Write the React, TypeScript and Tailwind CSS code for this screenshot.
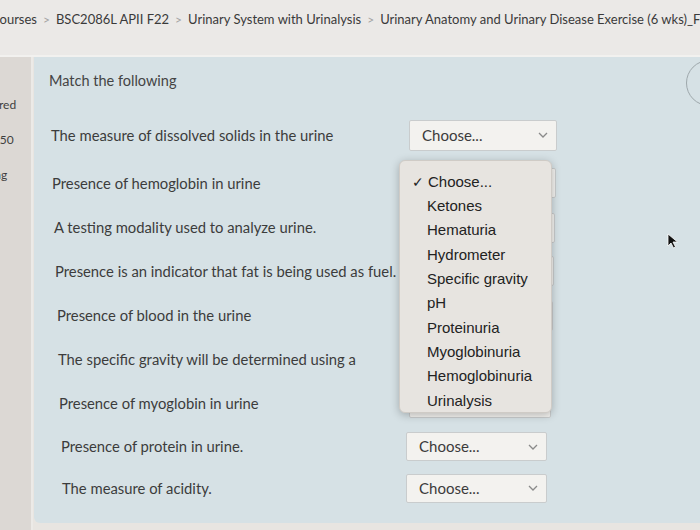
import React from "react";

const rows = [
  { text: "The measure of dissolved solids in the urine", h: "h-[50px]", pl: "pl-[17px]", sel: "w-[148px] h-[31px]" },
  { text: "Presence of hemoglobin in urine", h: "h-[46px]", pl: "pl-[18px]", sel: "w-[147px] h-[30px]" },
  { text: "A testing modality used to analyze urine.", h: "h-[43px]", pl: "pl-[20px]", sel: "w-[146px] h-[30px]" },
  { text: "Presence is an indicator that fat is being used as fuel.", h: "h-[44px]", pl: "pl-[21px]", sel: "w-[145px] h-[30px]" },
  { text: "Presence of blood in the urine", h: "h-[45px]", pl: "pl-[23px]", sel: "w-[144px] h-[30px]" },
  { text: "The specific gravity will be determined using a", h: "h-[43px]", pl: "pl-[24px]", sel: "w-[143px] h-[30px]" },
  { text: "Presence of myoglobin in urine", h: "h-[44px]", pl: "pl-[25px]", sel: "w-[142px] h-[30px]" },
  { text: "Presence of protein in urine.", h: "h-[43px]", pl: "pl-[27px]", sel: "w-[141px] h-[29px] -ml-[3px]" },
  { text: "The measure of acidity.", h: "h-[40px]", pl: "pl-[28px]", sel: "w-[141px] h-[29px] -ml-[3px]" },
];

const options = [
  "Ketones",
  "Hematuria",
  "Hydrometer",
  "Specific gravity",
  "pH",
  "Proteinuria",
  "Myoglobinuria",
  "Hemoglobinuria",
  "Urinalysis",
];

function Chevron() {
  return (
    <svg width="10" height="6" viewBox="0 0 10 6" className="shrink-0">
      <path d="M1 1 L5 5 L9 1" fill="none" stroke="#8a8a8a" strokeWidth="1.3" />
    </svg>
  );
}

function Select({ cls }: { cls: string }) {
  return (
    <div
      className={`${cls} flex items-center justify-between bg-[#f3f2ef] border border-[#c9cccd] rounded-[2px] pl-[12px] pr-[8px] text-[15px] text-[#3b3b3b] shrink-0`}
    >
      <span>Choose...</span>
      <Chevron />
    </div>
  );
}

function Sep() {
  return <span className="text-[#a3a3a3] mx-[6px] text-[12px]">&gt;</span>;
}

export default function App() {
  return (
    <div className="relative w-[700px] h-[530px] overflow-hidden bg-[#e8e5e1] font-['Lato','Open_Sans',sans-serif]">
      {/* breadcrumb */}
      <div className="h-[57px] flex items-center bg-[#ebe9e7] border-b-[2px] border-[#f2f1ef] text-[13px] text-[#3a3a3a] whitespace-nowrap pb-[16px]">
        <span className="-ml-[9px]">Courses</span>
        <Sep />
        <span>BSC2086L APII F22</span>
        <Sep />
        <span>Urinary System with Urinalysis</span>
        <Sep />
        <span>Urinary Anatomy and Urinary Disease Exercise (6 wks)_F22</span>
      </div>

      <div className="flex h-[473px]">
        {/* left panel */}
        <div className="w-[33px] shrink-0 bg-[#dcd8d4] border-r-[2px] border-[#eceae7] text-[12px] text-[#3f3f3f] overflow-hidden">
          <div className="h-[39px]" />
          <div className="h-[35px] -ml-[1px]">red</div>
          <div className="h-[35px] -ml-[3px]">.50</div>
          <div className="h-[35px] -ml-[5px]">ag</div>
        </div>

        {/* card */}
        <div className="relative flex-1 ml-[1px] mb-[7px] bg-[#d6e1e5] rounded-bl-[6px] overflow-hidden">
          <div className="pl-[15px] pt-[13px] h-[53px] text-[14.5px] text-[#444]">Match the following</div>
          {rows.map((r, i) => (
            <div key={i} className={`${r.h} flex items-center`}>
              <div className={`w-[375px] shrink-0 ${r.pl} text-[14.8px] text-[#3c3c3c] whitespace-nowrap`}>{r.text}</div>
              <Select cls={r.sel} />
            </div>
          ))}
          <div className="absolute left-[652px] top-[3px] w-[46px] h-[46px] rounded-full border-[1.5px] border-[#9ea7ab]" />
        </div>
      </div>

      {/* open dropdown menu */}
      <div className="absolute left-[399px] top-[160px] w-[153px] h-[253px] bg-[#e7e4e0] rounded-[6px] border border-[#cfcbc6] shadow-[0_2px_8px_rgba(0,0,0,0.25)] pt-[9px] font-['Liberation_Sans',Arial,sans-serif] text-[15px] text-[#222]">
        <div className="h-[24.3px] flex items-center">
          <span className="w-[28px] pl-[12px] text-[14px]">✓</span>
          <span>Choose...</span>
        </div>
        {options.map((o) => (
          <div key={o} className="h-[24.3px] flex items-center pl-[27px]">
            {o}
          </div>
        ))}
      </div>

      {/* mouse cursor */}
      <svg className="absolute left-[667px] top-[233px]" width="13" height="16" viewBox="0 0 13 16">
        <path d="M1 1 L1 13 L4 10 L6.5 15 L8.5 14 L6 9 L10.5 9 Z" fill="#111" stroke="#fff" strokeWidth="0.8" />
      </svg>
    </div>
  );
}
